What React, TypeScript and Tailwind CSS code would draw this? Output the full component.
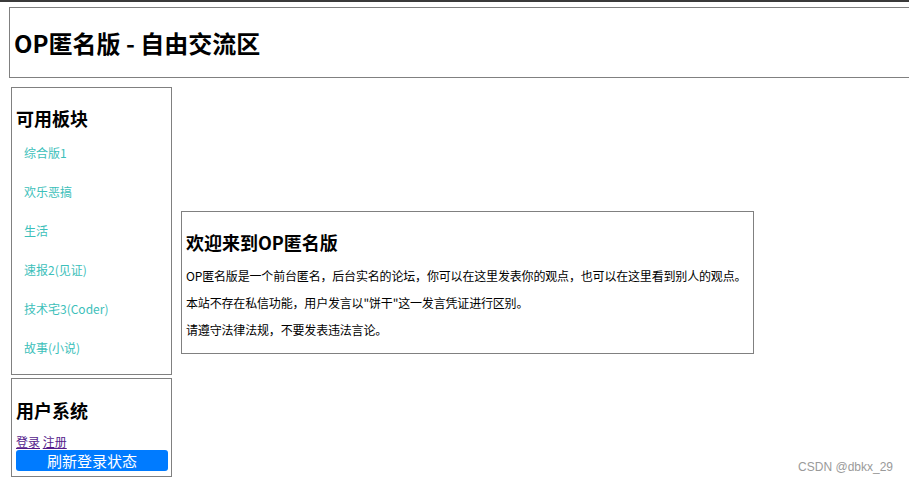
import React from "react";

const boards = ["综合版1", "欢乐恶搞", "生活", "速报2(见证)", "技术宅3(Coder)", "故事(小说)"];

const intro = [
  "OP匿名版是一个前台匿名，后台实名的论坛，你可以在这里发表你的观点，也可以在这里看到别人的观点。",
  "本站不存在私信功能，用户发言以\"饼干\"这一发言凭证进行区别。",
  "请遵守法律法规，不要发表违法言论。",
];

const App = () => {
  return (
    <div
      className="relative w-[909px] h-[485px] overflow-hidden bg-white text-black border-t-2 border-[#3a3a3a]"
      style={{ fontFamily: '"Noto Sans CJK SC", "Noto Sans", sans-serif' }}
    >
      {/* header */}
      <div className="ml-[9px] mt-[5px] w-[920px] h-[71px] border border-[#808080] flex items-center pl-[4px]">
        <h1 className="text-[24px] font-bold leading-none">OP匿名版 - 自由交流区</h1>
      </div>

      <div className="flex items-center mt-[9px] ml-[11px] gap-[9px]">
        {/* sidebar */}
        <div className="flex flex-col w-[161px]">
          <div className="h-[288px] border border-[#808080] pt-[19px] pl-[4px]">
            <h2 className="text-[18px] font-bold h-[22px] leading-[22px]">可用板块</h2>
            <div className="mt-[4px] pl-[8px]">
              {boards.map((b) => (
                <div key={b} className="h-[39px] flex items-center text-[12px] text-[#3cc0ba]">
                  {b}
                </div>
              ))}
            </div>
          </div>
          <div className="mt-[3px] h-[99px] border border-[#808080] pt-[20px] pl-[4px] pr-[3px]">
            <h2 className="text-[18px] font-bold h-[22px] leading-[22px]">用户系统</h2>
            <div className="mt-[13px] h-[16px] leading-[16px] text-[12px] text-[#551a8b]">
              <a href="#" className="underline">登录</a> <a href="#" className="underline">注册</a>
            </div>
            <button className="block w-[152px] h-[21px] rounded-[3px] bg-[#007bff] text-white text-[15px] leading-[21px]">
              刷新登录状态
            </button>
          </div>
        </div>

        {/* main */}
        <div className="w-[573px] h-[143px] border border-[#808080] pt-[19px] pl-[4px]">
          <h3 className="text-[18px] font-bold h-[22px] leading-[22px]">欢迎来到OP匿名版</h3>
          <div className="mt-[9px]">
            {intro.map((t) => (
              <p key={t} className="h-[27px] leading-[27px] text-[12px] whitespace-nowrap tracking-[-0.17px]">
                {t}
              </p>
            ))}
          </div>
        </div>
      </div>

      <div
        className="absolute right-[16px] bottom-[9px] text-[12px] text-[#9a9a9a]"
        style={{ fontFamily: '"Liberation Sans", Arial, sans-serif' }}
      >
        CSDN @dbkx_29
      </div>
    </div>
  );
};

export default App;
